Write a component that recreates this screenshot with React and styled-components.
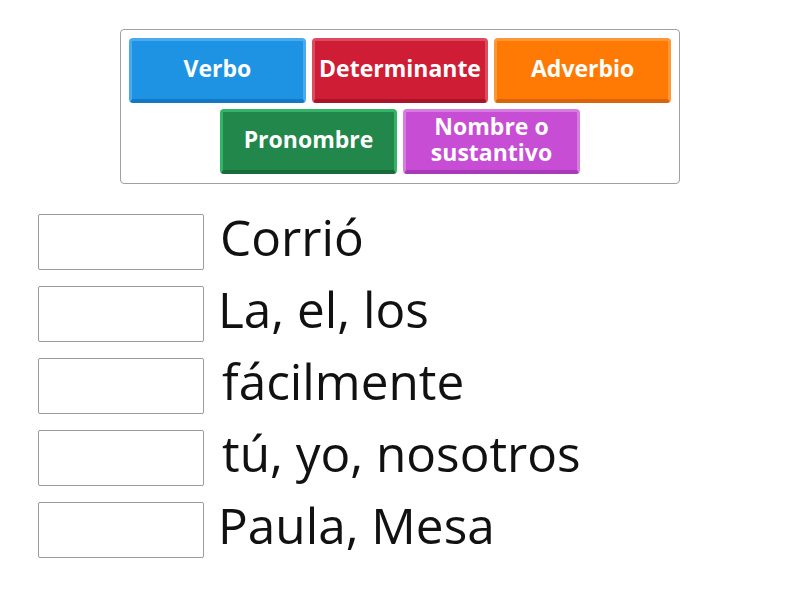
import React from 'react'
import styled, { createGlobalStyle } from 'styled-components'

const GlobalStyle = createGlobalStyle`
  body {
    margin: 0;
    background: #ffffff;
    font-family: 'Open Sans', 'Noto Sans', sans-serif;
  }
`

const tiles = [
  { label: 'Verbo', face: '#1e93e4', rim: '#49aaee', low: '#1479c4' },
  { label: 'Determinante', face: '#cf1d36', rim: '#de4b5e', low: '#a8142a' },
  { label: 'Adverbio', face: '#ff7a05', rim: '#ff9638', low: '#d9640a' },
  { label: 'Pronombre', face: '#21874a', rim: '#33b466', low: '#186a39' },
  { label: 'Nombre o sustantivo', face: '#c64dd4', rim: '#d77ddf', low: '#a83ab9' },
]

// indent: small per-item nudge of the text, as in the original game board
const items = [
  { text: 'Corrió', indent: 2 },
  { text: 'La, el, los', indent: 0 },
  { text: 'fácilmente', indent: 4 },
  { text: 'tú, yo, nosotros', indent: 4 },
  { text: 'Paula, Mesa', indent: 0 },
]

function App() {
  return (
    <Page>
      <GlobalStyle />
      <Bank>
        <TileRow>
          {tiles.slice(0, 3).map((t) => (
            <Tile key={t.label} $face={t.face} $rim={t.rim} $low={t.low}>
              {t.label}
            </Tile>
          ))}
        </TileRow>
        <TileRow>
          {tiles.slice(3).map((t) => (
            <Tile key={t.label} $face={t.face} $rim={t.rim} $low={t.low}>
              {t.label}
            </Tile>
          ))}
        </TileRow>
      </Bank>
      <List>
        {items.map((it) => (
          <Row key={it.text}>
            <Slot />
            <Word $indent={it.indent}>{it.text}</Word>
          </Row>
        ))}
      </List>
    </Page>
  )
}

export default App

const Page = styled.div`
  width: 800px;
  height: 600px;
  padding-top: 29px;
  box-sizing: border-box;
`

const Bank = styled.div`
  width: 560px;
  height: 155px;
  margin-left: 120px;
  box-sizing: border-box;
  border: 1px solid #a0a0a0;
  border-radius: 4px;
  padding: 8px 8px;
  display: flex;
  flex-direction: column;
  gap: 6px;
`

const TileRow = styled.div`
  display: flex;
  justify-content: center;
  gap: 6px;
`

const Tile = styled.div`
  width: 177px;
  height: 65px;
  box-sizing: border-box;
  border-radius: 4px;
  background: ${(p) => p.$face};
  border: 3px solid ${(p) => p.$rim};
  border-bottom: 4px solid ${(p) => p.$low};
  color: #ffffff;
  font-weight: 700;
  font-size: 23px;
  line-height: 26px;
  text-align: center;
  display: flex;
  align-items: center;
  justify-content: center;
  padding: 0 2px 4px;
  white-space: normal;
`

const List = styled.div`
  margin-top: 30px;
  margin-left: 38px;
  display: flex;
  flex-direction: column;
  gap: 17px;
`

const Row = styled.div`
  display: flex;
  align-items: center;
  gap: 14px;
  height: 55px;
`

const Slot = styled.div`
  width: 166px;
  height: 56px;
  box-sizing: border-box;
  border: 1px solid #9a9a9a;
  border-radius: 2px;
  background: #ffffff;
`

const Word = styled.div`
  font-size: 49.5px;
  color: #111111;
  line-height: 56px;
  margin-top: -10px;
  padding-left: ${(p) => p.$indent}px;
  white-space: nowrap;
`
